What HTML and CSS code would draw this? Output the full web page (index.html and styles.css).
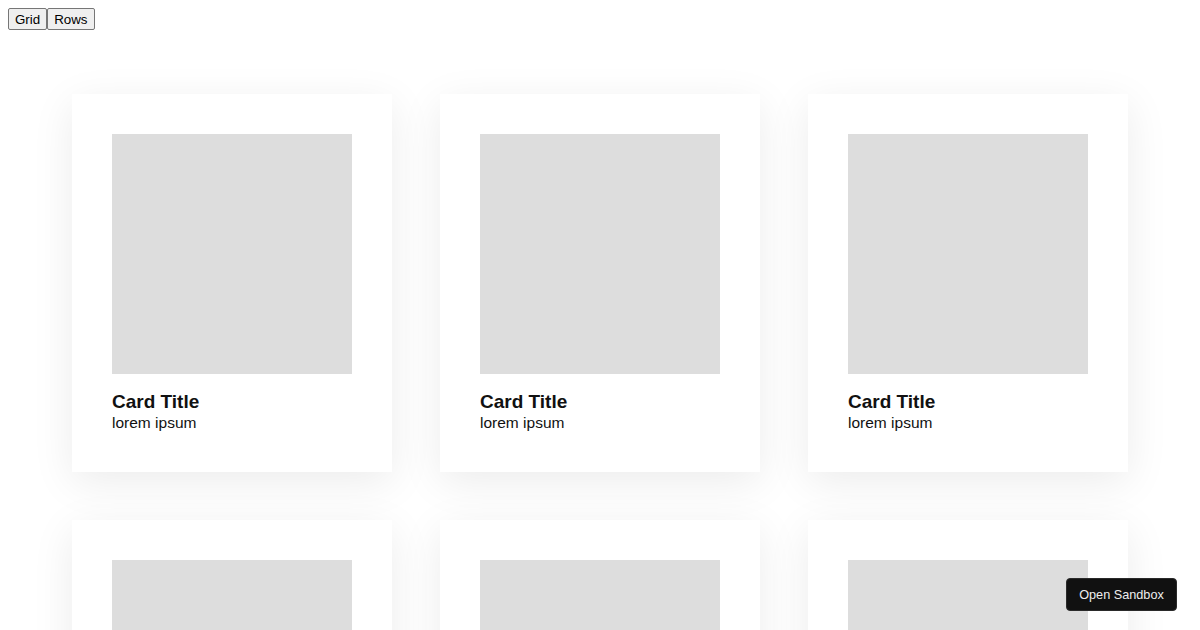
FILE: index.html
```html
<!DOCTYPE html>
<html>
<head>
<meta charset="utf-8">
<link rel="stylesheet" href="styles.css">
</head>
<body>
<div class="toolbar"><button class="btn">Grid</button><button class="btn">Rows</button></div>
<div class="grid">
  <div class="card"><div class="thumb"></div><div class="title">Card Title</div><div class="text">lorem ipsum</div></div>
  <div class="card"><div class="thumb"></div><div class="title">Card Title</div><div class="text">lorem ipsum</div></div>
  <div class="card"><div class="thumb"></div><div class="title">Card Title</div><div class="text">lorem ipsum</div></div>
  <div class="card"><div class="thumb"></div><div class="title">Card Title</div><div class="text">lorem ipsum</div></div>
  <div class="card"><div class="thumb"></div><div class="title">Card Title</div><div class="text">lorem ipsum</div></div>
  <div class="card"><div class="thumb"></div><div class="title">Card Title</div><div class="text">lorem ipsum</div></div>
</div>
<button class="sandbox">Open Sandbox</button>
</body>
</html>
```
FILE: styles.css
```css
html { margin: 0; padding: 0; height: 630px; overflow: hidden; }
body {
  margin: 8px;
  font-family: "Liberation Sans", Arial, sans-serif;
  background: #fff;
}
.toolbar { display: flex; height: 22px; }
.btn {
  font-family: "Liberation Sans", Arial, sans-serif;
  font-size: 13.33px;
  padding: 1px 6px;
  margin: 0;
  height: 22px;
  background: #efefef;
  border: 1px solid #767676;
  border-radius: 2px;
  color: #000;
}
.grid {
  display: grid;
  grid-template-columns: repeat(3, 320px);
  gap: 48px;
  justify-content: center;
  margin: 64px -8px 0;
}
.card {
  background: #fff;
  padding: 40px;
  box-shadow: 0 10px 40px rgba(0,0,0,0.08);
}
.thumb { width: 240px; height: 240px; background: #dddddd; }
.title {
  margin-top: 16px;
  font-size: 19px;
  line-height: 23px;
  font-weight: bold;
  color: #111;
}
.text {
  font-size: 15.5px;
  line-height: 19px;
  color: #111;
}
.sandbox {
  position: fixed;
  right: 23px;
  bottom: 19px;
  width: 111px;
  height: 33px;
  background: #111;
  color: #eee;
  border: 1px solid #2a2a2a;
  border-radius: 4px;
  font-family: "Liberation Sans", Arial, sans-serif;
  font-size: 12.7px;
  padding: 0;
}
```
